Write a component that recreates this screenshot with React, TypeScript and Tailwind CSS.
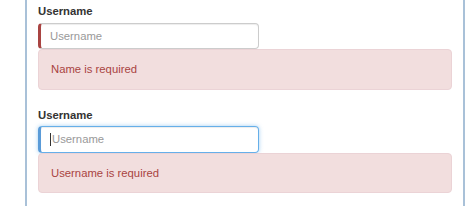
export default function App() {
  return (
    <div
      className="h-[206px] w-[474px] bg-white"
      style={{ fontFamily: '"Liberation Sans", Arial, sans-serif' }}
    >
      <div className="ml-[25px] h-full w-[440px] border-x-2 border-[#a9c1d8] pl-[11px] pt-[3px]">
        {/* 1つ目のフィールド */}
        <div>
          <label className="mb-[4px] block text-[11.3px] font-bold leading-[16px] text-[#333]">
            Username
          </label>
          <div className="flex h-[26px] w-[221px] items-center rounded-[4px] border border-l-[3px] border-[#ccc] border-l-[#a94442] pl-[9px] text-[11.3px] text-[#999] shadow-[inset_0_1px_1px_rgba(0,0,0,0.075)]">
            Username
          </div>
          <div className="flex h-[41px] w-[414px] items-center rounded-[4px] border border-[#ebd3d6] bg-[#f2dede] pl-[12px] text-[11.3px] text-[#a94442]">
            Name is required
          </div>
        </div>

        {/* 2つ目のフィールド */}
        <div className="mt-[17px]">
          <label className="mb-[3px] block text-[11.3px] font-bold leading-[16px] text-[#333]">
            Username
          </label>
          <div className="flex h-[27px] w-[221px] items-center rounded-[4px] border border-l-[3px] border-[#66afe9] border-l-[#5a9bd8] pl-[9px] text-[11.3px] text-[#999] shadow-[inset_0_1px_1px_rgba(0,0,0,0.075),0_0_4px_rgba(102,175,233,0.6)]">
            <span className="mr-px inline-block h-[13px] w-px bg-[#333]" />
            Username
          </div>
          <div className="flex h-[40px] w-[414px] items-center rounded-[4px] border border-[#ebd3d6] bg-[#f2dede] pl-[12px] text-[11.3px] text-[#a94442]">
            Username is required
          </div>
        </div>
      </div>
    </div>
  );
}
